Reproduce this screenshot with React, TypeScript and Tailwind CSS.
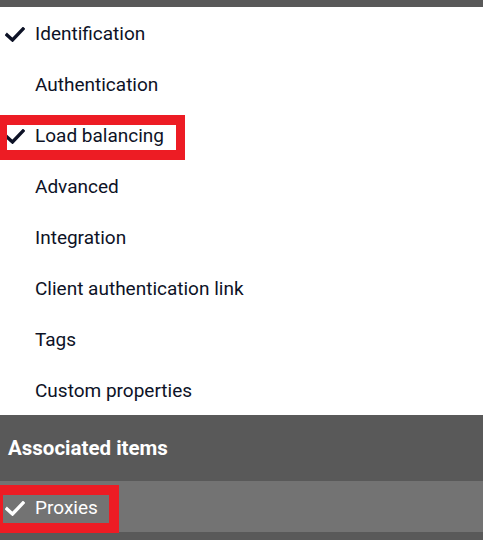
import React from "react";

function Check({ color, className }: { color: string; className?: string }) {
  return (
    <svg width="20" height="15" viewBox="0 0 20 15" className={className}>
      <path d="M2 8 L7.5 13 L18 2" fill="none" stroke={color} strokeWidth="3.4" strokeLinecap="square" strokeLinejoin="miter" />
    </svg>
  );
}

const items: { label: string; checked: boolean }[] = [
  { label: "Identification", checked: true },
  { label: "Authentication", checked: false },
  { label: "Load balancing", checked: true },
  { label: "Advanced", checked: false },
  { label: "Integration", checked: false },
  { label: "Client authentication link", checked: false },
  { label: "Tags", checked: false },
  { label: "Custom properties", checked: false },
];

export default function App() {
  return (
    <div
      className="relative w-[483px] h-[541px] overflow-hidden bg-white"
      style={{ fontFamily: "Roboto, 'Liberation Sans', sans-serif" }}
    >
      <div className="h-[7px] bg-[#595959]" />
      {items.map((it) => (
        <div key={it.label} className="h-[51px] pt-[4px] flex items-center text-[19px] text-[#0d1226]">
          <div className="w-[35px] pl-[5px] flex items-center">
            {it.checked && <Check color="#0d1226" />}
          </div>
          <span>{it.label}</span>
        </div>
      ))}
      <div className="h-[66px] bg-[#595959] flex items-center pl-[8px]">
        <span className="text-white font-bold text-[20.5px]">Associated items</span>
      </div>
      <div className="h-[51px] pt-[4px] bg-[#737373] flex items-center text-[19px] text-white">
        <div className="w-[35px] pl-[5px] flex items-center">
          <Check color="#ffffff" />
        </div>
        <span>Proxies</span>
      </div>
      <div className="h-[8px] bg-[#595959]" />

      {/* annotation boxes */}
      <div className="absolute left-0 top-[115px] w-[185px] h-[45px] border-[#ed1c24] border-l-[7px] border-r-[9px] border-t-[10px] border-b-[10px]" />
      <div className="absolute left-0 top-[485px] w-[119px] h-[48px] border-[#ed1c24] border-l-[3px] border-r-[10px] border-t-[10px] border-b-[10px]" />
    </div>
  );
}
